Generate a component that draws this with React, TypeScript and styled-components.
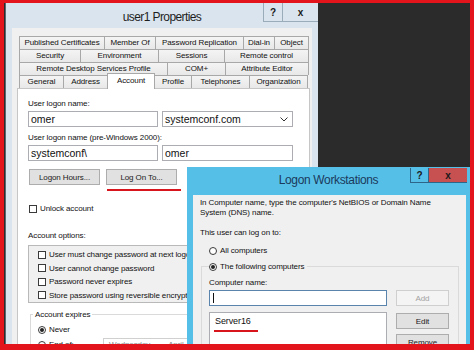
import styled, { createGlobalStyle } from 'styled-components'

const Global = createGlobalStyle`
  html, body { margin: 0; padding: 0; }
  body {
    background: #2b2b2b;
    font-family: 'Liberation Sans', Arial, sans-serif;
    font-size: 8px;
    letter-spacing: -0.1px;
    color: #111;
  }
  * { box-sizing: border-box; }
`

const Frame = styled.div`
  position: relative;
  width: 474px;
  height: 350px;
  border-style: solid;
  border-color: #e3141c;
  border-width: 3px 4px 6px 4px;
  background: #2b2b2b;
  overflow: hidden;
`

// ---- window chrome ----
const Window = styled.div`
  position: absolute;
  left: 1px;
  top: 0;
  width: 313px;
  height: 360px;
  border-left: 1px solid #5c6670;
  background: #d9e4ee;
  display: flex;
  flex-direction: column;
`

const Dialog = styled.div`
  position: absolute;
  left: 183px;
  top: 164px;
  width: 283px;
  height: 200px;
  background: #56bfe8;
  display: flex;
  flex-direction: column;
`

const TitleBar = styled.div<{ $h: number; $side: number; $pad?: string }>`
  height: ${p => p.$h}px;
  flex: none;
  padding: ${p => p.$pad ?? '0'};
  display: grid;
  grid-template-columns: ${p => p.$side}px 1fr ${p => p.$side}px;
  align-items: start;
`

const TitleText = styled.div<{ $size: number; $lh: number; $color: string; $ls: number }>`
  grid-column: 2;
  text-align: center;
  font-size: ${p => p.$size}px;
  line-height: ${p => p.$lh}px;
  letter-spacing: ${p => p.$ls}px;
  color: ${p => p.$color};
  white-space: nowrap;
`

const Controls = styled.div`
  grid-column: 3;
  display: flex;
  justify-content: flex-end;
`

const CtlButton = styled.div<{ $w: number; $h: number; $line: string; $bg?: string }>`
  width: ${p => p.$w}px;
  height: ${p => p.$h}px;
  border-left: 1px solid ${p => p.$line};
  border-bottom: 1px solid ${p => p.$line};
  background: ${p => p.$bg ?? 'transparent'};
  display: flex;
  align-items: center;
  justify-content: center;
  font-weight: bold;
  font-size: 10px;
  color: #1a1a1a;
`

// ---- property sheet ----
const WinBody = styled.div`
  flex: 1;
  margin: 0 6px;
  background: #f0f0f0;
  padding: 8px 2px 0 5px;
  display: flex;
  flex-direction: column;
`

const TabStrip = styled.div`
  margin: 0 1px 0 2px;
  display: flex;
  flex-direction: column;
`

const TabRow = styled.div`
  display: flex;
  align-items: flex-start;
  height: 13px;
`

const Tab = styled.div<{ $w: number; $active?: boolean }>`
  width: ${p => p.$w}px;
  height: ${p => (p.$active ? 16 : 13)}px;
  margin-top: ${p => (p.$active ? -2 : 0)}px;
  margin-right: ${p => (p.$active ? -1 : 0)}px;
  border: 1px solid #a8a8a8;
  border-width: ${p => (p.$active ? '1px 1px 0 1px' : '1px 0 0 1px')};
  &:last-child { border-right-width: 1px; }
  background: ${p => (p.$active ? '#ffffff' : 'linear-gradient(#f4f4f4, #e8e8e8)')};
  position: relative;
  z-index: ${p => (p.$active ? 2 : 0)};
  text-align: center;
  line-height: ${p => (p.$active ? 14 : 12)}px;
  white-space: nowrap;
  overflow: hidden;
`

const Panel = styled.div`
  flex: 1;
  border: 1px solid #c6c6c6;
  background: #ffffff;
  padding: 9px 0 0 10px;
  display: flex;
  flex-direction: column;
`

const Label = styled.div<{ $mt?: number; $ml?: number }>`
  line-height: 11px;
  margin-top: ${p => p.$mt ?? 0}px;
  margin-left: ${p => p.$ml ?? 0}px;
  white-space: nowrap;
`

const FieldRow = styled.div<{ $mt: number; $gap: number }>`
  display: flex;
  gap: ${p => p.$gap}px;
  margin-top: ${p => p.$mt}px;
`

const TextBox = styled.div<{ $w: number; $h?: number; $line?: string }>`
  width: ${p => p.$w}px;
  height: ${p => p.$h ?? 16}px;
  border: 1px solid ${p => p.$line ?? '#abadb3'};
  background: #fff;
  font-size: 10.5px;
  letter-spacing: 0;
  line-height: ${p => (p.$h ?? 16) - 2}px;
  padding-left: 2px;
  display: flex;
  align-items: center;
  justify-content: space-between;
  white-space: nowrap;
  overflow: hidden;
`

const Chevron = () => (
  <svg width="8" height="5" viewBox="0 0 8 5" style={{ marginRight: 4 }}>
    <polyline points="0.5,0.5 4,4 7.5,0.5" fill="none" stroke="#333" strokeWidth="1" />
  </svg>
)

const Caret = styled.span`
  width: 1px;
  height: 10px;
  background: #111;
  margin-left: 1px;
`

const ButtonRow = styled.div`
  display: flex;
  align-items: flex-start;
  gap: 6px;
  margin: 8px 0 0 1px;
`

const ButtonCol = styled.div<{ $gap?: number; $mt?: number }>`
  display: flex;
  flex-direction: column;
  gap: ${p => p.$gap ?? 0}px;
  margin-top: ${p => p.$mt ?? 0}px;
`

const Btn = styled.div<{ $w: number; $disabled?: boolean }>`
  width: ${p => p.$w}px;
  height: 16px;
  border: 1px solid ${p => (p.$disabled ? '#cfcfcf' : '#adadad')};
  background: ${p => (p.$disabled ? '#f4f4f4' : '#e1e1e1')};
  color: ${p => (p.$disabled ? '#a3a3a3' : '#1a1a1a')};
  display: flex;
  align-items: center;
  justify-content: center;
  white-space: nowrap;
`

const RedMark = styled.div<{ $w: number; $mt: number; $ml?: number }>`
  width: ${p => p.$w}px;
  height: 2px;
  margin-top: ${p => p.$mt}px;
  margin-left: ${p => p.$ml ?? 0}px;
  background: #d8151d;
`

const OptionRow = styled.div<{ $mt?: number; $ml?: number }>`
  display: flex;
  align-items: center;
  gap: 3px;
  height: 11px;
  margin-top: ${p => p.$mt ?? 0}px;
  margin-left: ${p => p.$ml ?? 0}px;
  white-space: nowrap;
`

const Check = styled.span`
  flex: none;
  width: 8px;
  height: 8px;
  border: 1px solid #3a3a3a;
  background: #fff;
`

const Radio = styled.span<{ $on?: boolean }>`
  flex: none;
  width: 8px;
  height: 8px;
  border-radius: 50%;
  border: 1px solid #3a3a3a;
  background: #fff;
  display: flex;
  align-items: center;
  justify-content: center;
  &::after {
    content: '';
    width: 4px;
    height: 4px;
    border-radius: 50%;
    background: ${p => (p.$on ? '#222' : 'transparent')};
  }
`

const OptText = styled.span<{ $w?: number }>`
  ${p => (p.$w ? `width: ${p.$w}px;` : '')}
`

const OptionList = styled.div`
  width: 265px;
  height: 58px;
  margin-top: 4px;
  border: 1px solid #b9b9b9;
  background: #f0f0f0;
  padding: 2px 0 0 9px;
  display: flex;
  flex-direction: column;
  & > div { height: 13.5px; }
`

const Group = styled.fieldset<{ $w: number; $h: number; $mt: number; $ml: number; $pl: number }>`
  width: ${p => p.$w}px;
  height: ${p => p.$h}px;
  margin: ${p => p.$mt}px 0 0 ${p => p.$ml}px;
  padding: 0 0 0 ${p => p.$pl}px;
  border: 1px solid #dadada;
  min-width: 0;
  flex: none;
`

const Legend = styled.legend<{ $pad: string }>`
  padding: ${p => p.$pad};
  line-height: 11px;
`

const DateBox = styled.div`
  width: 90px;
  height: 14px;
  border: 1px solid #d0d0d0;
  background: #fff;
  color: #8a8a8a;
  padding-left: 5px;
  line-height: 12px;
  word-spacing: 6px;
`

// ---- dialog ----
const DlgBody = styled.div`
  flex: 1;
  margin: 0 4px 0 6px;
  background: #f0f0f0;
  padding: 3px 0 0 7px;
  display: flex;
  flex-direction: column;
`

const Para = styled.div`
  line-height: 10px;
  width: 250px;
`

const ListBox = styled.div`
  width: 178px;
  height: 60px;
  border: 1px solid #abadb3;
  background: #fff;
  padding: 3px 0 0 5px;
  font-size: 9px;
  line-height: 11px;
`

const tabRows: { label: string; w: number; active?: boolean }[][] = [
  [
    { label: 'Published Certificates', w: 85 },
    { label: 'Member Of', w: 51 },
    { label: 'Password Replication', w: 88 },
    { label: 'Dial-in', w: 31 },
    { label: 'Object', w: 35 },
  ],
  [
    { label: 'Security', w: 61 },
    { label: 'Environment', w: 78 },
    { label: 'Sessions', w: 66 },
    { label: 'Remote control', w: 85 },
  ],
  [
    { label: 'Remote Desktop Services Profile', w: 148 },
    { label: 'COM+', w: 58 },
    { label: 'Attribute Editor', w: 84 },
  ],
  [
    { label: 'General', w: 44 },
    { label: 'Address', w: 44 },
    { label: 'Account', w: 48, active: true },
    { label: 'Profile', w: 37 },
    { label: 'Telephones', w: 58 },
    { label: 'Organization', w: 59 },
  ],
]

const accountOptions = [
  'User must change password at next logon',
  'User cannot change password',
  'Password never expires',
  'Store password using reversible encryption',
]

const App: React.FC = () => {
  return (
    <>
      <Global />
      <Frame>
        <Window>
          <TitleBar $h={25} $side={55}>
            <TitleText $size={12} $lh={28} $ls={-0.6} $color="#1e1e1e">user1 Properties</TitleText>
            <Controls>
              <CtlButton $w={19} $h={19} $line="#9aabba">?</CtlButton>
              <CtlButton $w={36} $h={19} $line="#9aabba">x</CtlButton>
            </Controls>
          </TitleBar>
          <WinBody>
            <TabStrip>
              {tabRows.map((row, i) => (
                <TabRow key={i}>
                  {row.map(t => (
                    <Tab key={t.label} $w={t.w} $active={t.active}>{t.label}</Tab>
                  ))}
                </TabRow>
              ))}
            </TabStrip>
            <Panel>
              <Label>User logon name:</Label>
              <FieldRow $mt={2} $gap={4}>
                <TextBox $w={130}>omer</TextBox>
                <TextBox $w={131}>systemconf.com<Chevron /></TextBox>
              </FieldRow>
              <Label $mt={5}>User logon name (pre-Windows 2000):</Label>
              <FieldRow $mt={2} $gap={4}>
                <TextBox $w={130}>systemconf\</TextBox>
                <TextBox $w={131}>omer</TextBox>
              </FieldRow>
              <ButtonRow>
                <Btn $w={71}>Logon Hours...</Btn>
                <ButtonCol>
                  <Btn $w={71}>Log On To...</Btn>
                  <RedMark $w={74} $mt={4} $ml={1} />
                </ButtonCol>
              </ButtonRow>
              <OptionRow $mt={12} $ml={1}>
                <Check />
                <OptText>Unlock account</OptText>
              </OptionRow>
              <Label $mt={16}>Account options:</Label>
              <OptionList>
                {accountOptions.map(o => (
                  <OptionRow key={o}>
                    <Check />
                    <OptText>{o}</OptText>
                  </OptionRow>
                ))}
              </OptionList>
              <Group $w={265} $h={50} $mt={6} $ml={2} $pl={2}>
                <Legend $pad="0 2px">Account expires</Legend>
                <OptionRow $mt={4} $ml={5}>
                  <Radio $on />
                  <OptText>Never</OptText>
                </OptionRow>
                <OptionRow $mt={4} $ml={5}>
                  <Radio />
                  <OptText $w={51}>End of:</OptText>
                  <DateBox>Wednesday , April</DateBox>
                </OptionRow>
              </Group>
            </Panel>
          </WinBody>
        </Window>

        <Dialog>
          <TitleBar $h={28} $side={57} $pad="1px 3px 0">
            <TitleText $size={12} $lh={25} $ls={-0.35} $color="#1b3a5c">Logon Workstations</TitleText>
            <Controls>
              <CtlButton $w={18} $h={15} $line="#2d6688">?</CtlButton>
              <CtlButton $w={39} $h={15} $line="#2d6688" $bg="#c75050">x</CtlButton>
            </Controls>
          </TitleBar>
          <DlgBody>
            <Para>
              In Computer name, type the computer's NetBIOS or Domain Name System (DNS) name.
            </Para>
            <Label $mt={9}>This user can log on to:</Label>
            <OptionRow $mt={7} $ml={9}>
              <Radio />
              <OptText>All computers</OptText>
            </OptionRow>
            <Group $w={258} $h={100} $mt={5} $ml={1} $pl={7}>
              <Legend $pad="0 3px 0 0">
                <OptionRow>
                  <Radio $on />
                  <OptText>The following computers</OptText>
                </OptionRow>
              </Legend>
              <Label $mt={5}>Computer name:</Label>
              <FieldRow $mt={2} $gap={9}>
                <TextBox $w={178} $line="#5b84ad"><Caret /></TextBox>
                <Btn $w={53} $disabled>Add</Btn>
              </FieldRow>
              <FieldRow $mt={6} $gap={9}>
                <ListBox>
                  Server16
                  <RedMark $w={44} $mt={3} $ml={-1} />
                </ListBox>
                <ButtonCol $gap={5} $mt={1}>
                  <Btn $w={53}>Edit</Btn>
                  <Btn $w={53}>Remove</Btn>
                </ButtonCol>
              </FieldRow>
            </Group>
          </DlgBody>
        </Dialog>
      </Frame>
    </>
  )
}

export default App
